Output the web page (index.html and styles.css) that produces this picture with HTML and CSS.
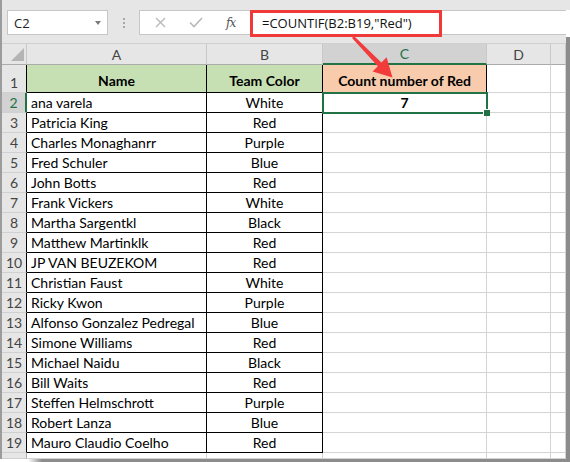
FILE: index.html
```html
<!DOCTYPE html>
<html>
<head>
<meta charset="utf-8">
<link rel="stylesheet" href="styles.css">
</head>
<body>
<div class="page">
  <div class="screen">
    <div class="toolbar">
      <div class="namebox"><span class="nbtext">C2</span><span class="caret"></span></div>
      <div class="dots"><i></i><i></i><i></i></div>
      <div class="fxbox">
        <svg class="ico-x" width="11" height="11" viewBox="0 0 11 11"><path d="M1 1L10 10M10 1L1 10" stroke="#b9b9b9" stroke-width="1.4" fill="none"/></svg>
        <svg class="ico-ok" width="14" height="11" viewBox="0 0 14 11"><path d="M1 5.5L5 9.5L13 1" stroke="#b9b9b9" stroke-width="1.6" fill="none"/></svg>
        <span class="fx">fx</span>
      </div>
      <div class="formula"><div class="hl">=COUNTIF(B2:B19,"Red")</div></div>
    </div>
    <div class="sheet">
      <div class="ch corner"><svg width="13" height="13" viewBox="0 0 13 13"><path d="M0 13L13 13L13 0Z" fill="#b4b4b4"/></svg></div>
      <div class="ch">A</div>
      <div class="ch">B</div>
      <div class="ch sel">C</div>
      <div class="ch">D</div>
      <div class="ch"></div>

      <div class="rh tb">1</div>
      <div class="c t ga b ctr">Name</div>
      <div class="c t ga b ctr">Team Color</div>
      <div class="c t oc b ctr">Count number of Red</div>
      <div class="c"></div><div class="c"></div>

      <div class="rh tb rsel">2</div>
      <div class="c t l">ana varela</div>
      <div class="c t ctr">White</div>
      <div class="c active b ctr">7</div>
      <div class="c"></div><div class="c"></div>

      <div class="rh tb">3</div><div class="c t l">Patricia King</div><div class="c t ctr">Red</div><div class="c"></div><div class="c"></div><div class="c"></div>
      <div class="rh tb">4</div><div class="c t l">Charles Monaghanrr</div><div class="c t ctr">Purple</div><div class="c"></div><div class="c"></div><div class="c"></div>
      <div class="rh tb">5</div><div class="c t l">Fred Schuler</div><div class="c t ctr">Blue</div><div class="c"></div><div class="c"></div><div class="c"></div>
      <div class="rh tb">6</div><div class="c t l">John Botts</div><div class="c t ctr">Red</div><div class="c"></div><div class="c"></div><div class="c"></div>
      <div class="rh tb">7</div><div class="c t l">Frank Vickers</div><div class="c t ctr">White</div><div class="c"></div><div class="c"></div><div class="c"></div>
      <div class="rh tb">8</div><div class="c t l">Martha Sargentkl</div><div class="c t ctr">Black</div><div class="c"></div><div class="c"></div><div class="c"></div>
      <div class="rh tb">9</div><div class="c t l">Matthew Martinklk</div><div class="c t ctr">Red</div><div class="c"></div><div class="c"></div><div class="c"></div>
      <div class="rh tb">10</div><div class="c t l">JP VAN BEUZEKOM</div><div class="c t ctr">Red</div><div class="c"></div><div class="c"></div><div class="c"></div>
      <div class="rh tb">11</div><div class="c t l">Christian Faust</div><div class="c t ctr">White</div><div class="c"></div><div class="c"></div><div class="c"></div>
      <div class="rh tb">12</div><div class="c t l">Ricky Kwon</div><div class="c t ctr">Purple</div><div class="c"></div><div class="c"></div><div class="c"></div>
      <div class="rh tb">13</div><div class="c t l">Alfonso Gonzalez Pedregal</div><div class="c t ctr">Blue</div><div class="c"></div><div class="c"></div><div class="c"></div>
      <div class="rh tb">14</div><div class="c t l">Simone Williams</div><div class="c t ctr">Red</div><div class="c"></div><div class="c"></div><div class="c"></div>
      <div class="rh tb">15</div><div class="c t l">Michael Naidu</div><div class="c t ctr">Black</div><div class="c"></div><div class="c"></div><div class="c"></div>
      <div class="rh tb">16</div><div class="c t l">Bill Waits</div><div class="c t ctr">Red</div><div class="c"></div><div class="c"></div><div class="c"></div>
      <div class="rh tb">17</div><div class="c t l">Steffen Helmschrott</div><div class="c t ctr">Purple</div><div class="c"></div><div class="c"></div><div class="c"></div>
      <div class="rh tb">18</div><div class="c t l">Robert Lanza</div><div class="c t ctr">Blue</div><div class="c"></div><div class="c"></div><div class="c"></div>
      <div class="rh tb">19</div><div class="c t l">Mauro Claudio Coelho</div><div class="c t ctr">Red</div><div class="c"></div><div class="c"></div><div class="c"></div>

      <div class="rh"></div><div class="c"></div><div class="c"></div><div class="c"></div><div class="c"></div><div class="c"></div>
    </div>
    <svg class="arrow" width="566" height="100" viewBox="0 0 566 100">
      <polygon points="354,36 381.4,62.4 386.6,57.2 392.5,77.5 372.6,71.4 377.8,66.2 352,38" fill="#f23b3b"/>
    </svg>
  </div>
  <div class="rshadow"></div>
  <div class="bshadow"></div>
</div>
</body>
</html>
```

FILE: styles.css
```css
* { box-sizing: border-box; }
html, body { margin: 0; padding: 0; background: #ffffff; }
.page {
  width: 570px;
  height: 462px;
  display: grid;
  grid-template-columns: 566px 4px;
  grid-template-rows: 459px 3px;
  overflow: hidden;
}
.screen {
  position: relative;
  border-left: 2px solid #9c9c9c;
  background: #ffffff;
  display: flex;
  flex-direction: column;
}
.rshadow {
  background: linear-gradient(to bottom, #e6e6e6 0, #e6e6e6 10px, #ffffff 10px, #ffffff 37px, #8c8c8c 37px);
}
.bshadow {
  grid-column: 1 / 3;
  background: linear-gradient(to right, #ffffff 0, #ffffff 28px, #8c8c8c 42px);
}
.toolbar {
  height: 44px;
  background: #e6e6e6;
  display: flex;
  align-items: flex-start;
  padding-top: 10px;
  padding-left: 5px;
  border-bottom: 1px solid #d0d0d0;
  font-family: "Open Sans", "Noto Sans", sans-serif;
}
.namebox {
  width: 101px;
  height: 25px;
  background: #fff;
  border: 1px solid #c6c6c6;
  display: flex;
  align-items: center;
  justify-content: space-between;
  padding: 0 6px 0 6px;
  font-size: 13px;
  color: #222;
}
.caret {
  width: 0; height: 0;
  border-left: 3.5px solid transparent;
  border-right: 3.5px solid transparent;
  border-top: 4px solid #7a7a7a;
  margin-top: 1px;
}
.dots {
  width: 31px;
  height: 25px;
  display: flex;
  flex-direction: column;
  align-items: center;
  justify-content: center;
  gap: 2px;
}
.dots i {
  display: block;
  width: 2px; height: 2px;
  background: #a8a8a8;
}
.fxbox {
  width: 111px;
  height: 25px;
  background: #fff;
  border: 1px solid #c6c6c6;
  border-right: none;
  display: flex;
  align-items: center;
  padding-left: 15px;
}
.ico-x { margin-right: 23px; }
.ico-ok { margin-right: 23px; }
.fx {
  font-family: "DejaVu Serif", "Liberation Serif", serif;
  font-style: italic;
  font-size: 12px;
  color: #555;
  letter-spacing: -1px;
}
.formula {
  flex: 1;
  height: 25px;
  background: #fff;
  border-top: 1px solid #c6c6c6;
  border-bottom: 1px solid #c6c6c6;
}
.hl {
  width: 192px;
  height: 27px;
  margin-top: -1px;
  border: 3px solid #f03a3a;
  padding-left: 9px;
  font-size: 13px;
  line-height: 21px;
  color: #111;
  white-space: nowrap;
}
.sheet {
  display: grid;
  grid-template-columns: 25px 180px 116px 164px 64px 15px;
  grid-template-rows: 21px 28px repeat(18, 20px) 6px;
  font-family: Lato, "Open Sans", sans-serif;
}
.ch {
  background: #e6e6e6;
  border-right: 1px solid #c8c8c8;
  border-bottom: 1px solid #ababab;
  display: flex;
  align-items: center;
  justify-content: center;
  font-size: 14px;
  color: #444;
}
.ch.corner {
  justify-content: flex-end;
  align-items: flex-end;
  padding: 0 2px 3px 0;
}
.ch.sel {
  background: #d2d2d2;
  color: #217346;
  border-bottom: 2px solid #217346;
}
.rh {
  background: #e6e6e6;
  border-right: 1px solid #ababab;
  border-bottom: 1px solid #d0d0d0;
  display: flex;
  align-items: flex-end;
  justify-content: center;
  padding-bottom: 1px;
  font-size: 14px;
  color: #444;
}
.rh.tb { border-right-color: #000; }
.rh.rsel {
  background: #d2d2d2;
  color: #217346;
  border-right: 2px solid #217346;
}
.c {
  border-right: 1px solid #d4d4d4;
  border-bottom: 1px solid #d4d4d4;
  display: flex;
  align-items: flex-end;
  padding-bottom: 1px;
  font-size: 14px;
  color: #000;
  white-space: nowrap;
  overflow: hidden;
}
.c.t {
  border-right-color: #000;
  border-bottom-color: #000;
}
.c.ga { background: #c6e0b4; padding-bottom: 3px; }
.c.oc { background: #f8cbad; padding-bottom: 3px; }
.l { padding-left: 4px; }
.ctr { justify-content: center; }
.b { font-weight: bold; }
.c.active {
  position: relative;
  overflow: visible;
  border-right-color: #000;
  outline: 2px solid #217346;
  outline-offset: -1px;
}
.c.active::after {
  content: "";
  position: absolute;
  right: -4px;
  bottom: -4px;
  width: 6px;
  height: 6px;
  background: #217346;
  border-left: 1px solid #fff;
  border-top: 1px solid #fff;
}
.arrow {
  position: absolute;
  left: -2px;
  top: 0;
  pointer-events: none;
}
```
